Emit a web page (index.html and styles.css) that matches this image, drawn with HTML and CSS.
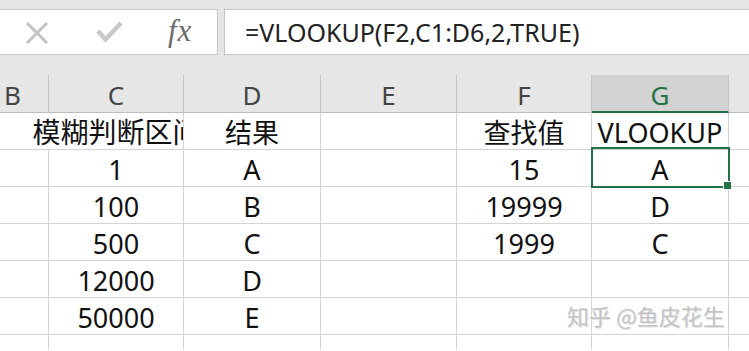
FILE: index.html
```html
<!DOCTYPE html>
<html>
<head>
<meta charset="utf-8">
<link rel="stylesheet" href="styles.css">
</head>
<body>
<div class="toolbar">
  <div class="btnbox">
    <svg class="ico-x" width="24" height="22" viewBox="0 0 24 22"><path d="M2 1 L22 21 M22 1 L2 21" stroke="#c3c3c3" stroke-width="3" fill="none"/></svg>
    <svg class="ico-ok" width="27" height="22" viewBox="0 0 27 22"><path d="M2 10 L9.5 18.5 L25 2" stroke="#c8c8c8" stroke-width="4.5" fill="none"/></svg>
    <span class="fx">fx</span>
  </div>
  <div class="formula">=VLOOKUP(F2,C1:D6,2,TRUE)</div>
</div>
<div class="sheet">
  <div class="hd hd-b">B</div>
  <div class="hd">C</div>
  <div class="hd">D</div>
  <div class="hd">E</div>
  <div class="hd">F</div>
  <div class="hd hd-sel">G</div>
  <div class="hd hd-last"></div>

  <div class="c c-span"><div class="spill">模糊判断区间</div></div>
  <div class="c">结果</div>
  <div class="c"></div>
  <div class="c">查找值</div>
  <div class="c">VLOOKUP</div>
  <div class="c c-last"></div>

  <div class="c"></div>
  <div class="c">1</div>
  <div class="c">A</div>
  <div class="c"></div>
  <div class="c">15</div>
  <div class="c c-active">A<span class="sel"><span class="handle"></span></span></div>
  <div class="c c-last"></div>

  <div class="c"></div>
  <div class="c">100</div>
  <div class="c">B</div>
  <div class="c"></div>
  <div class="c">19999</div>
  <div class="c">D</div>
  <div class="c c-last"></div>

  <div class="c"></div>
  <div class="c">500</div>
  <div class="c">C</div>
  <div class="c"></div>
  <div class="c">1999</div>
  <div class="c">C</div>
  <div class="c c-last"></div>

  <div class="c"></div>
  <div class="c">12000</div>
  <div class="c">D</div>
  <div class="c"></div>
  <div class="c"></div>
  <div class="c"></div>
  <div class="c c-last"></div>

  <div class="c"></div>
  <div class="c">50000</div>
  <div class="c">E</div>
  <div class="c"></div>
  <div class="c"></div>
  <div class="c"></div>
  <div class="c c-last"></div>

  <div class="c c-cut"></div>
  <div class="c c-cut"></div>
  <div class="c c-cut"></div>
  <div class="c c-cut"></div>
  <div class="c c-cut"></div>
  <div class="c c-cut"></div>
  <div class="c c-cut c-last"></div>
</div>
<div class="watermark">知乎 @鱼皮花生</div>
</body>
</html>
```

FILE: styles.css
```css
* { box-sizing: border-box; }
html, body { margin: 0; padding: 0; }
html { overflow: hidden; }
body {
  width: 749px;
  height: 351px;
  overflow: hidden;
  background: #ffffff;
  font-family: "Noto Sans", "Noto Sans CJK SC", sans-serif;
  position: relative;
}
.toolbar {
  height: 75px;
  background: #e6e6e6;
  padding-top: 9px;
  display: flex;
  align-items: flex-start;
}
.btnbox {
  width: 218px;
  height: 46px;
  background: #fff;
  border: 1px solid #c6c6c6;
  border-left: none;
  display: flex;
  align-items: center;
  padding-left: 25px;
}
.ico-x { margin-top: 1px; }
.ico-ok { margin-left: 47px; }
.fx {
  margin-left: 45px;
  font-family: "Liberation Serif", serif;
  font-style: italic;
  font-size: 31px;
  color: #6b6b6b;
  line-height: 30px;
  margin-top: -2px;
  letter-spacing: 1px;
}
.formula {
  margin-left: 6px;
  flex: 1;
  height: 46px;
  background: #fff;
  border: 1px solid #c6c6c6;
  border-right: none;
  padding-left: 20px;
  font-size: 25px;
  line-height: 44px;
  color: #222;
  white-space: nowrap;
}
.sheet {
  display: grid;
  grid-template-columns: 49px 135px 137px 136px 135px 137px 20px;
  grid-template-rows: 38px repeat(6, 37px) 15px;
  height: 276px;
  overflow: hidden;
}
.hd {
  background: #e6e6e6;
  border-right: 1px solid #c4c4c4;
  border-bottom: 1px solid #bdbdbd;
  text-align: center;
  font-size: 26px;
  color: #444;
  padding-top: 5px;
  line-height: 31px;
}
.hd-b { text-align: left; padding-left: 4px; }
.hd-last { border-right: none; }
.hd-sel {
  background: #d2d2d2;
  color: #217346;
  border-bottom: 2px solid #217346;
}
.c {
  border-right: 1px solid #d4d4d4;
  border-bottom: 1px solid #d4d4d4;
  text-align: center;
  font-size: 27px;
  color: #111;
  padding-top: 3px;
  line-height: 33px;
  white-space: nowrap;
}
.c-cut { border-bottom: none; }
.c-last { border-right: none; }
.c-span {
  grid-column: span 2;
  overflow: hidden;
  padding-top: 0;
}
.spill {
  margin-left: 49px;
  width: 135px;
  display: flex;
  justify-content: center;
  padding-top: 3px;
  font-size: 28px;
  white-space: nowrap;
}
.c-active { position: relative; }
.sel {
  position: absolute;
  left: -1px;
  top: -3px;
  right: -2px;
  bottom: -2px;
  border: 2px solid #217346;
}
.handle {
  position: absolute;
  right: -3px;
  bottom: -3px;
  width: 8px;
  height: 8px;
  background: #217346;
  border-left: 1px solid #fff;
  border-top: 1px solid #fff;
}
.watermark {
  position: absolute;
  left: 567px;
  top: 300px;
  font-size: 22px;
  line-height: 30px;
  color: #c4c4c4;
  font-family: "Noto Sans CJK SC", sans-serif;
  text-shadow: 1px 1px 0 #e6e6e6;
  white-space: nowrap;
}
```
